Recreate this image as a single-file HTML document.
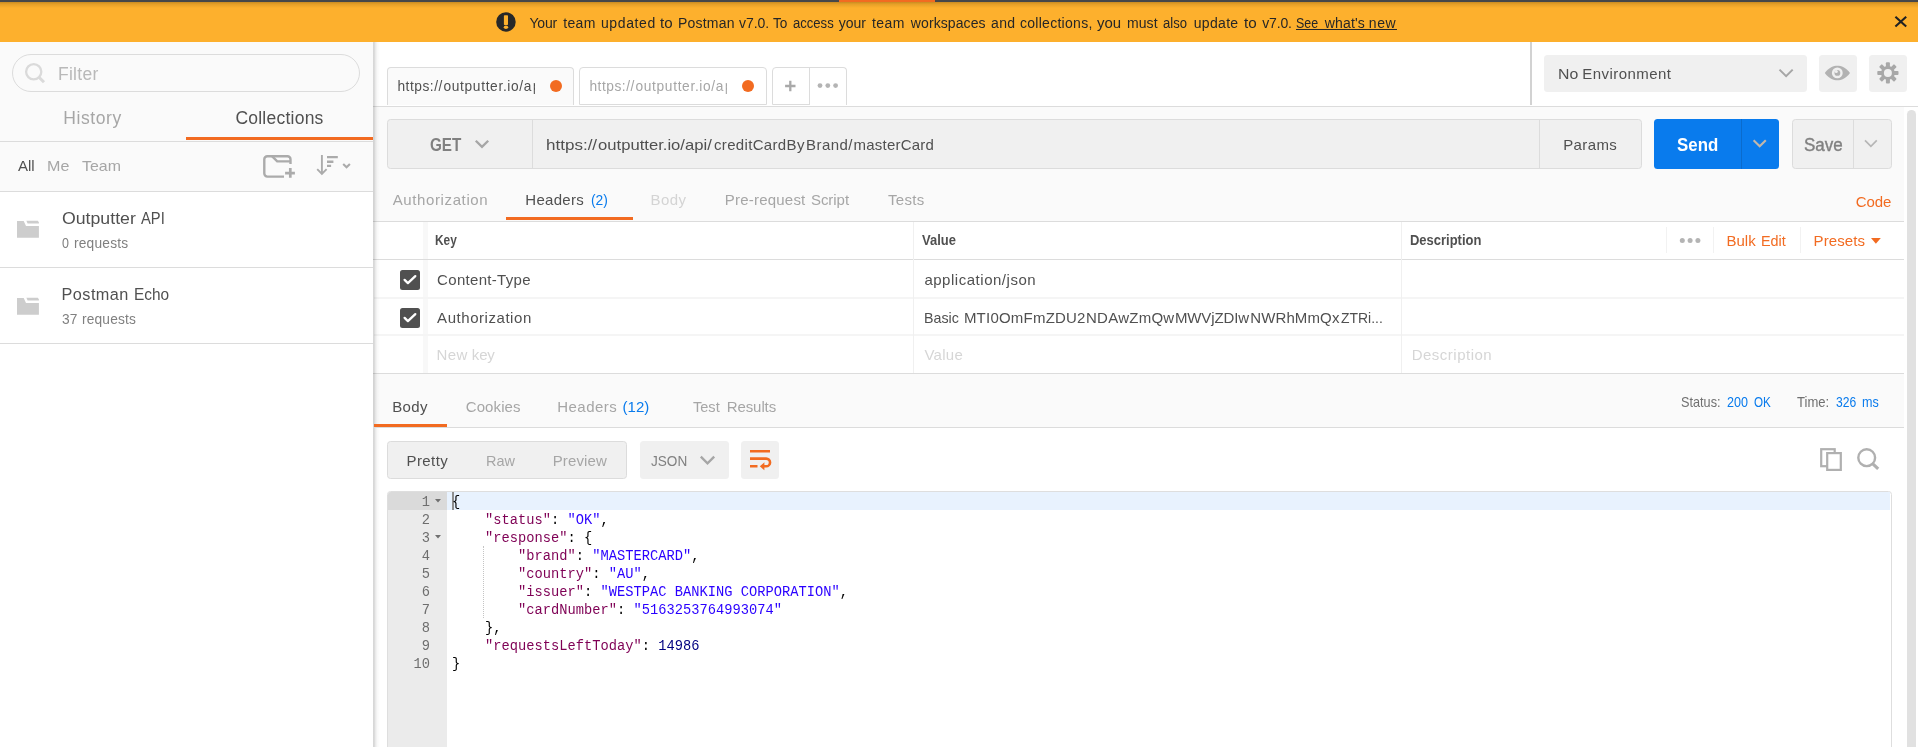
<!DOCTYPE html>
<html lang="en">
<head>
<meta charset="utf-8">
<title>Postman</title>
<style>
*{box-sizing:border-box;margin:0;padding:0}
html,body{width:1918px;height:747px;overflow:hidden;background:#fff}
body{position:relative;will-change:transform;font-family:"Liberation Sans",sans-serif;font-size:15px;color:#505050}
.a{position:absolute}
.t{position:absolute;white-space:pre;line-height:20px;height:20px}
svg{position:absolute;overflow:visible}
.hl{position:absolute;background:#dcdcdc;height:1px}
.vl{position:absolute;background:#dcdcdc;width:1px}
.btn{position:absolute;background:#f0f0f0;border-radius:3.5px}
.code{font-family:"Liberation Mono",monospace;font-size:13.72px;letter-spacing:0.017px;line-height:18px;height:18px;position:absolute;white-space:pre;color:#000;left:452px}
.k{color:#7f0055}.s{color:#2a00ff}.n{color:#000080}
.ln{font-family:"Liberation Mono",monospace;font-size:13.72px;line-height:18px;height:18px;position:absolute;text-align:right;width:42px;left:388px;color:#6e6e6e}
</style>
</head>
<body>
<!-- banner -->
<div class="a" style="left:0;top:0;width:1918px;height:42px;background:#fdb02d"></div>
<div class="a" style="left:0;top:1px;width:1918px;height:7px;background:linear-gradient(180deg,rgba(60,40,0,.34),rgba(60,40,0,.12) 45%,rgba(60,40,0,0))"></div>
<div class="a" style="left:0;top:0;width:1918px;height:1.7px;background:#464749"></div>
<div class="a" style="left:839px;top:0;width:96px;height:1.7px;background:#f26b21"></div>
<svg style="left:496px;top:12px" width="20" height="20" viewBox="0 0 20 20"><circle cx="9.95" cy="9.95" r="9.75" fill="#282828"/><rect x="7.9" y="3.2" width="4.1" height="9.7" rx="0.7" fill="#fdb02d"/><ellipse cx="9.95" cy="15.2" rx="2.2" ry="1.7" fill="#fdb02d"/></svg>
<svg style="left:1890px;top:11px" width="22" height="22" viewBox="0 0 22 22"><path d="M5.4 5.7 L16.2 15.6 M16.2 5.7 L5.4 15.6" stroke="#222" stroke-width="2.1" fill="none"/></svg>

<div class="a" style="left:1295.5px;top:29px;width:101px;height:1px;background:#262626"></div>

<!-- sidebar -->
<div class="a" style="left:0;top:42px;width:373px;height:705px;background:#fafafa"></div>
<div class="a" style="left:0;top:192px;width:373px;height:555px;background:#fff"></div>
<div class="a" style="left:12px;top:54px;width:348px;height:38px;border:1px solid #dcdcdc;border-radius:19px;background:#fafafa"></div>
<svg style="left:24px;top:62px" width="24" height="24" viewBox="0 0 24 24"><circle cx="9.7" cy="9.8" r="7.6" stroke="#dadada" stroke-width="2.3" fill="none"/><path d="M15 15.3 L20 20.2" stroke="#dadada" stroke-width="3" fill="none"/></svg>
<div class="a" style="left:186px;top:137px;width:187px;height:3px;background:#f26b21"></div>
<div class="hl" style="left:0;top:141px;width:373px"></div>
<svg style="left:250px;top:145px" width="110" height="45" viewBox="250 145 110 45"><g stroke="#ababab" fill="none" stroke-width="2.4"><path d="M284 176.6 H267.3 a3 3 0 0 1 -3 -3 V159.2 a3 3 0 0 1 3 -3 H287.5 a3 3 0 0 1 3 3 V163.9"/><path d="M272.2 156.4 L277.2 161.4 H290.5"/><path d="M290.3 168.1 V177.8 M285.1 173.1 H294.9" stroke-width="2.7"/><path d="M321.9 155 V173.6 M317.2 169.2 L321.9 173.9 L326.6 169.2" stroke-width="1.9"/><path d="M327 157.2 H337.8 M327 161.75 H333.4 M327 165.9 H331.1" stroke-width="2.3"/><path d="M343.2 164 L346.55 167.3 L349.9 164" stroke-width="2.1"/></g></svg>
<div class="hl" style="left:0;top:191px;width:373px"></div>
<div class="hl" style="left:0;top:267px;width:373px"></div>
<div class="hl" style="left:0;top:343px;width:373px"></div>
<svg style="left:0;top:212px" width="60" height="30" viewBox="0 0 60 30"><path d="M17 9 H23.7 L26 14.1 H38.9 V25.7 H17 Z M26.4 8.8 H37.8 L38.9 10.2 V11.6 H27.6 Z" fill="#cdcdcd"/></svg>
<svg style="left:0;top:288.5px" width="60" height="30" viewBox="0 0 60 30"><path d="M17 9 H23.7 L26 14.1 H38.9 V25.7 H17 Z M26.4 8.8 H37.8 L38.9 10.2 V11.6 H27.6 Z" fill="#cdcdcd"/></svg>

<!-- main backgrounds -->
<div class="a" style="left:373px;top:42px;width:1545px;height:64px;background:#fff"></div>
<div class="a" style="left:373px;top:107px;width:1531px;height:115px;background:#fafafa"></div>
<div class="a" style="left:373px;top:374px;width:1531px;height:53px;background:#fafafa"></div>
<div class="hl" style="left:373px;top:106px;width:1545px"></div>

<!-- tabs -->
<div class="a" style="left:387px;top:67px;width:187px;height:38px;background:#fafafa;border:1px solid #dcdcdc;border-bottom:none;border-radius:4px 4px 0 0"></div>
<div class="a" style="left:579px;top:67px;width:188px;height:38px;background:#fff;border:1px solid #dcdcdc;border-radius:4px 4px 0 0"></div>
<div class="a" style="left:772px;top:67px;width:38px;height:38px;background:#fff;border:1px solid #dcdcdc;border-radius:4px 0 0 0"></div>
<div class="a" style="left:809px;top:67px;width:38px;height:38px;background:#fff;border:1px solid #dcdcdc;border-bottom:none;border-radius:0 4px 0 0"></div>
<div class="a" style="left:390px;top:70px;width:145.1px;height:32px;overflow:hidden"><div class="t" style="left:7.40px;top:6.50px;font-size:13.75px;color:#505050"><span style="display:inline-block;letter-spacing:0.521px">https://</span><span style="display:inline-block;letter-spacing:0.653px;margin-left:0.66px">outputter.io/a</span><span style="display:inline-block;transform:scaleX(0.8750);transform-origin:0 0;margin-left:1.05px">p</span></div></div>
<div class="a" style="left:582px;top:70px;width:145.2px;height:32px;overflow:hidden"><div class="t" style="left:7.40px;top:6.50px;font-size:13.75px;color:#a6a6a6"><span style="display:inline-block;letter-spacing:0.521px">https://</span><span style="display:inline-block;letter-spacing:0.653px;margin-left:0.66px">outputter.io/a</span><span style="display:inline-block;transform:scaleX(0.8750);transform-origin:0 0;margin-left:1.05px">p</span></div></div>
<div class="a" style="left:549.5px;top:79.8px;width:12.4px;height:12.4px;border-radius:50%;background:#f26b21"></div>
<div class="a" style="left:742px;top:79.8px;width:12.4px;height:12.4px;border-radius:50%;background:#f26b21"></div>
<svg style="left:780px;top:76px" width="20" height="20" viewBox="0 0 20 20"><path d="M10.3 4.8 V15.2 M5.1 10 H15.5" stroke="#a9a9a9" stroke-width="2.3" fill="none"/></svg>
<svg style="left:815px;top:80px" width="26" height="12" viewBox="0 0 26 12"><circle cx="5" cy="5.6" r="2.4" fill="#b4b4b4"/><circle cx="12.8" cy="5.6" r="2.4" fill="#b4b4b4"/><circle cx="20.6" cy="5.6" r="2.4" fill="#b4b4b4"/></svg>

<!-- environment -->
<div class="a" style="left:1530px;top:42px;width:2px;height:63px;background:#d2d2d2"></div>
<div class="btn" style="left:1544px;top:55px;width:263px;height:37px"></div>
<svg style="left:1778px;top:68px" width="16" height="10" viewBox="0 0 16 10"><path d="M1.5 1.6 L8.1 8.2 L14.7 1.6" stroke="#a6a6a6" stroke-width="2" fill="none"/></svg>
<div class="btn" style="left:1819px;top:55px;width:38px;height:37px"></div>
<div class="btn" style="left:1869px;top:55px;width:38px;height:37px"></div>
<svg style="left:1824px;top:64px" width="27" height="18" viewBox="0 0 27 18"><path d="M0.8 8.9 C5 3.2 9.5 1.7 13.4 1.7 C17.3 1.7 21.8 3.2 26 8.9 C21.8 14.6 17.3 16.2 13.4 16.2 C9.5 16.2 5 14.6 0.8 8.9 Z" fill="#b2b2b2"/><circle cx="13.3" cy="8.9" r="5.4" fill="#f0f0f0"/><circle cx="13.4" cy="8.9" r="2.9" fill="#b2b2b2"/><circle cx="12.3" cy="7.6" r="1.5" fill="#f0f0f0"/></svg>
<svg style="left:1876px;top:61px" width="24" height="24" viewBox="0 0 24 24"><g fill="#a8a8a8"><circle cx="11.9" cy="11.9" r="6.9"/><rect x="9.9" y="1.3" width="4" height="21.2" rx="0.9"/><rect x="9.9" y="1.3" width="4" height="21.2" rx="0.9" transform="rotate(45 11.9 11.9)"/><rect x="9.9" y="1.3" width="4" height="21.2" rx="0.9" transform="rotate(90 11.9 11.9)"/><rect x="9.9" y="1.3" width="4" height="21.2" rx="0.9" transform="rotate(135 11.9 11.9)"/></g><circle cx="11.9" cy="11.9" r="4" fill="#f0f0f0"/></svg>

<!-- URL bar -->
<div class="a" style="left:387px;top:119px;width:1255px;height:50px;background:#f0f0f0;border:1px solid #dcdcdc;border-radius:3.5px"></div>
<div class="vl" style="left:532px;top:120px;height:48px"></div>
<div class="vl" style="left:1539px;top:120px;height:48px"></div>
<svg style="left:474px;top:139px" width="16" height="11" viewBox="0 0 16 11"><path d="M1.8 1.7 L8 7.9 L14.2 1.7" stroke="#a6a6a6" stroke-width="2.3" fill="none"/></svg>
<div class="a" style="left:1654px;top:118.6px;width:125px;height:50.2px;background:#097bed;border-radius:3.5px"></div>
<div class="a" style="left:1741px;top:118.6px;width:1px;height:50.2px;background:#0a6bcd"></div>
<svg style="left:1752px;top:139px" width="16" height="10" viewBox="0 0 16 10"><path d="M1.6 1.2 L7.7 7.3 L13.8 1.2" stroke="#c2b7ab" stroke-width="2.1" fill="none"/></svg>
<div class="a" style="left:1792px;top:119px;width:100px;height:50px;background:#f0f0f0;border:1px solid #dcdcdc;border-radius:3.5px"></div>
<div class="vl" style="left:1853px;top:120px;height:48px"></div>
<svg style="left:1864px;top:139px" width="14" height="9" viewBox="0 0 14 9"><path d="M1 1.4 L6.9 7.3 L12.8 1.4" stroke="#b6b6b6" stroke-width="1.7" fill="none"/></svg>

<!-- request tabs -->
<div class="a" style="left:506px;top:217px;width:127px;height:3px;background:#f26b21"></div>
<div class="hl" style="left:373px;top:221px;width:1531px"></div>

<!-- headers table -->
<div class="a" style="left:423px;top:222px;width:5px;height:151px;background:#f8f8f8"></div>
<div class="hl" style="left:373px;top:259px;width:1531px"></div>
<div class="hl" style="left:374px;top:296.7px;width:1530px;height:2px;background:#f5f5f5"></div>
<div class="hl" style="left:374px;top:334px;width:1530px;height:2px;background:#f5f5f5"></div>
<div class="hl" style="left:373px;top:373px;width:1531px"></div>
<div class="vl" style="left:913px;top:222px;height:151px;background:#f0f0f0"></div>
<div class="vl" style="left:1401px;top:222px;height:151px;background:#f0f0f0"></div>
<div class="vl" style="left:1666px;top:227px;height:26px;background:#f2f2f2"></div>
<div class="vl" style="left:1713px;top:227px;height:26px;background:#f2f2f2"></div>
<div class="vl" style="left:1800px;top:227px;height:26px;background:#f2f2f2"></div>
<svg style="left:1678px;top:236px" width="26" height="10" viewBox="0 0 26 10"><circle cx="4.3" cy="4.6" r="2.5" fill="#b4b4b4"/><circle cx="12.1" cy="4.6" r="2.5" fill="#b4b4b4"/><circle cx="19.9" cy="4.6" r="2.5" fill="#b4b4b4"/></svg>
<svg style="left:1871px;top:238.3px" width="10" height="6" viewBox="0 0 10 6"><path d="M0 0 H9.8 L4.9 5.8 Z" fill="#f26b21"/></svg>
<div class="a" style="left:400px;top:270px;width:20px;height:20px;border-radius:2.5px;background:#505050"></div><svg style="left:400px;top:270px" width="20" height="20" viewBox="0 0 20 20"><path d="M4.6 9.9 L7.9 13.1 L15.3 6.1" stroke="#fff" stroke-width="2.3" stroke-linecap="round" stroke-linejoin="round" fill="none"/></svg>
<div class="a" style="left:400px;top:308px;width:20px;height:20px;border-radius:2.5px;background:#505050"></div><svg style="left:400px;top:308px" width="20" height="20" viewBox="0 0 20 20"><path d="M4.6 9.9 L7.9 13.1 L15.3 6.1" stroke="#fff" stroke-width="2.3" stroke-linecap="round" stroke-linejoin="round" fill="none"/></svg>

<div class="a" style="left:373px;top:42px;width:7px;height:705px;background:linear-gradient(90deg,rgba(0,0,0,.16),rgba(0,0,0,.15) 18%,rgba(0,0,0,.075) 38%,rgba(0,0,0,.025) 65%,rgba(0,0,0,0))"></div>
<!-- response tabs -->
<div class="hl" style="left:373px;top:427px;width:1531px"></div>
<div class="a" style="left:374px;top:424px;width:73px;height:3px;background:#f26b21"></div>

<!-- response toolbar -->
<div class="a" style="left:387px;top:441px;width:240px;height:37.5px;background:#f0f0f0;border:1px solid #dcdcdc;border-radius:3.5px"></div>
<div class="btn" style="left:640px;top:441px;width:88.6px;height:37.5px"></div>
<svg style="left:699px;top:455px" width="18" height="11" viewBox="0 0 18 11"><path d="M1.8 1.6 L8.5 8.3 L15.2 1.6" stroke="#a6a6a6" stroke-width="2.3" fill="none"/></svg>
<div class="btn" style="left:741px;top:441px;width:38px;height:37.5px"></div>
<svg style="left:736px;top:436px" width="48" height="48" viewBox="736 436 48 48"><path d="M750 451.3 H770 M750 458.6 H766.2 a3.85 3.85 0 0 1 0 7.7 H763 M750 466.3 H757.5" stroke="#f26b21" stroke-width="2.6" fill="none"/><path d="M759.8 466.3 L764.4 462.3 V470.3 Z" fill="#f26b21"/></svg>
<svg style="left:1815px;top:443px" width="70" height="32" viewBox="1815 443 70 32"><g stroke="#b0b0b0" fill="none"><rect x="1821.2" y="449.2" width="13.5" height="17" stroke-width="2.2"/><rect x="1827.2" y="453.1" width="13.6" height="16.8" stroke-width="2.2" fill="#fff"/><circle cx="1866.7" cy="457.7" r="8.4" stroke-width="2.4"/><path d="M1872.8 463.8 L1878.2 468.8" stroke-width="3.2"/></g></svg>

<!-- code editor -->
<div class="a" style="left:387px;top:491px;width:1505px;height:260px;border:1px solid #dedede;border-radius:3.5px;background:#fff"></div>
<div class="a" style="left:388px;top:492px;width:59px;height:255px;background:#ebebeb;border-radius:3px 0 0 0"></div>
<div class="a" style="left:447px;top:492px;width:1443px;height:17.7px;background:#e8f2fe"></div>
<div class="a" style="left:388px;top:492px;width:59px;height:17.7px;background:#dadada;border-radius:3px 0 0 0"></div>
<div class="a" style="left:452px;top:492px;width:1.7px;height:17.7px;background:#8e8e8e"></div>
<div class="a" style="left:483px;top:546px;width:0;height:72px;border-left:1px dotted #c4c4c4"></div>
<svg style="left:435.2px;top:499.2px" width="6" height="4" viewBox="0 0 6 4"><path d="M0 0 H6 L3 3.5 Z" fill="#707070"/></svg>
<svg style="left:435.2px;top:535.2px" width="6" height="4" viewBox="0 0 6 4"><path d="M0 0 H6 L3 3.5 Z" fill="#707070"/></svg>
<div class="ln" style="top:493.5px">1</div>
<div class="ln" style="top:511.5px">2</div>
<div class="ln" style="top:529.5px">3</div>
<div class="ln" style="top:547.5px">4</div>
<div class="ln" style="top:565.5px">5</div>
<div class="ln" style="top:583.5px">6</div>
<div class="ln" style="top:601.5px">7</div>
<div class="ln" style="top:619.5px">8</div>
<div class="ln" style="top:637.5px">9</div>
<div class="ln" style="top:655.5px">10</div>
<div class="code" style="top:493.5px">{</div>
<div class="code" style="top:511.5px">    <span class="k">"status"</span>: <span class="s">"OK"</span>,</div>
<div class="code" style="top:529.5px">    <span class="k">"response"</span>: {</div>
<div class="code" style="top:547.5px">        <span class="k">"brand"</span>: <span class="s">"MASTERCARD"</span>,</div>
<div class="code" style="top:565.5px">        <span class="k">"country"</span>: <span class="s">"AU"</span>,</div>
<div class="code" style="top:583.5px">        <span class="k">"issuer"</span>: <span class="s">"WESTPAC BANKING CORPORATION"</span>,</div>
<div class="code" style="top:601.5px">        <span class="k">"cardNumber"</span>: <span class="s">"5163253764993074"</span></div>
<div class="code" style="top:619.5px">    },</div>
<div class="code" style="top:637.5px">    <span class="k">"requestsLeftToday"</span>: <span class="n">14986</span></div>
<div class="code" style="top:655.5px">}</div>

<!-- sidebar shadow + scrollbar -->
<div class="a" style="left:1904px;top:107px;width:14px;height:640px;background:#fff"></div>
<div class="a" style="left:1907px;top:109.8px;width:9px;height:650px;background:#e1e1e1;border-radius:4.5px"></div>

<!-- texts -->
<div class="t" style="left:57.90px;top:64.00px;font-size:17.5px;color:#b9b9b9;letter-spacing:0.308px">Filter</div>
<div class="t" style="left:63.30px;top:108.00px;font-size:17.5px;color:#a6a6a6;letter-spacing:0.584px">History</div>
<div class="t" style="left:235.40px;top:108.00px;font-size:17.5px;color:#505050;letter-spacing:0.236px">Collections</div>
<div class="t" style="left:18.00px;top:155.50px;font-size:15px;color:#505050;letter-spacing:-0.069px">All</div>
<div class="t" style="left:46.93px;top:155.50px;font-size:15px;color:#a6a6a6;transform:scaleX(1.0721);transform-origin:0 0">Me</div>
<div class="t" style="left:81.80px;top:155.50px;font-size:15px;color:#a6a6a6;transform:scaleX(1.0612);transform-origin:0 0">Team</div>
<div class="t" style="left:429.70px;top:135.00px;font-size:17.5px;color:#808080;transform:scaleX(0.8709);transform-origin:0 0;font-weight:700">GET</div>
<div class="t" style="left:1563.20px;top:134.50px;font-size:15px;color:#505050;letter-spacing:0.384px">Params</div>
<div class="t" style="left:1676.80px;top:135.00px;font-size:18px;color:#ffffff;transform:scaleX(0.9370);transform-origin:0 0;font-weight:700">Send</div>
<div class="t" style="left:1803.80px;top:135.00px;font-size:17.5px;color:#808080;transform:scaleX(0.9705);transform-origin:0 0;-webkit-text-stroke:0.4px #808080">Save</div>
<div class="t" style="left:392.70px;top:189.50px;font-size:15px;color:#a6a6a6;letter-spacing:0.616px">Authorization</div>
<div class="t" style="left:525.30px;top:189.50px;font-size:15px;color:#505050;letter-spacing:0.284px">Headers</div>
<div class="t" style="left:590.50px;top:189.50px;font-size:15px;color:#097bed;transform:scaleX(0.9216);transform-origin:0 0">(2)</div>
<div class="t" style="left:650.50px;top:189.50px;font-size:15px;color:#d4d4d4;letter-spacing:0.470px">Body</div>
<div class="t" style="left:888.00px;top:189.50px;font-size:15px;color:#a6a6a6;letter-spacing:0.298px">Tests</div>
<div class="t" style="left:1855.80px;top:191.50px;font-size:15px;color:#f26b21;letter-spacing:-0.106px">Code</div>
<div class="t" style="left:434.70px;top:230.50px;font-size:13.75px;color:#505050;transform:scaleX(0.8641);transform-origin:0 0;font-weight:700">Key</div>
<div class="t" style="left:922.20px;top:230.50px;font-size:13.75px;color:#505050;transform:scaleX(0.9427);transform-origin:0 0;font-weight:700">Value</div>
<div class="t" style="left:1409.70px;top:230.50px;font-size:13.75px;color:#505050;transform:scaleX(0.9437);transform-origin:0 0;font-weight:700">Description</div>
<div class="t" style="left:1813.60px;top:230.50px;font-size:15px;color:#f26b21;letter-spacing:0.075px">Presets</div>
<div class="t" style="left:437.10px;top:269.50px;font-size:15px;color:#505050;letter-spacing:0.308px">Content-Type</div>
<div class="t" style="left:924.40px;top:269.50px;font-size:15px;color:#505050;letter-spacing:0.523px">application/json</div>
<div class="t" style="left:437.10px;top:307.50px;font-size:15px;color:#505050;letter-spacing:0.549px">Authorization</div>
<div class="t" style="left:924.40px;top:344.50px;font-size:15px;color:#d6d6d6;letter-spacing:0.273px">Value</div>
<div class="t" style="left:1411.70px;top:344.50px;font-size:15px;color:#d6d6d6;letter-spacing:0.491px">Description</div>
<div class="t" style="left:392.25px;top:396.50px;font-size:15px;color:#505050;letter-spacing:0.354px">Body</div>
<div class="t" style="left:465.75px;top:396.50px;font-size:15px;color:#a6a6a6;letter-spacing:0.093px">Cookies</div>
<div class="t" style="left:557.25px;top:396.50px;font-size:15px;color:#a6a6a6;letter-spacing:0.467px">Headers</div>
<div class="t" style="left:622.50px;top:396.50px;font-size:15px;color:#097bed;letter-spacing:0.023px">(12)</div>
<div class="t" style="left:1681.35px;top:392.50px;font-size:13.75px;color:#707070;transform:scaleX(0.9230);transform-origin:0 0">Status:</div>
<div class="t" style="left:1797.10px;top:392.50px;font-size:13.75px;color:#707070;transform:scaleX(0.9502);transform-origin:0 0">Time:</div>
<div class="t" style="left:406.50px;top:450.50px;font-size:15px;color:#505050;letter-spacing:0.405px">Pretty</div>
<div class="t" style="left:485.64px;top:450.50px;font-size:15px;color:#a6a6a6;transform:scaleX(0.9632);transform-origin:0 0">Raw</div>
<div class="t" style="left:552.70px;top:450.50px;font-size:15px;color:#a6a6a6;letter-spacing:0.130px">Preview</div>
<div class="t" style="left:651.25px;top:450.50px;font-size:15px;color:#808080;transform:scaleX(0.9063);transform-origin:0 0">JSON</div>
<div class="t" style="left:529.40px;top:13.00px;font-size:14px;color:#262626"><span style="display:inline-block;letter-spacing:-0.175px">Your</span> <span style="display:inline-block;letter-spacing:0.346px;margin-left:2.32px">team</span> <span style="display:inline-block;letter-spacing:0.630px;margin-left:1.30px">updated</span> <span style="display:inline-block;transform:scaleX(1.0766);transform-origin:0 0;margin-left:0.29px">to</span> <span style="display:inline-block;letter-spacing:0.240px;margin-left:2.23px">Postman</span> <span style="display:inline-block;letter-spacing:-0.065px;margin-left:0.28px">v7.0.</span> <span style="display:inline-block;transform:scaleX(0.9733);transform-origin:0 0;margin-left:0.49px">To</span> <span style="display:inline-block;transform:scaleX(0.9341);transform-origin:0 0;margin-left:0.72px">access</span> <span style="display:inline-block;letter-spacing:-0.024px;margin-left:-1.56px">your</span> <span style="display:inline-block;letter-spacing:0.413px;margin-left:2.27px">team</span> <span style="display:inline-block;letter-spacing:0.087px;margin-left:2.14px">workspaces</span> <span style="display:inline-block;letter-spacing:0.314px;margin-left:1.62px">and</span> <span style="display:inline-block;letter-spacing:0.285px;margin-left:0.61px">collections,</span> <span style="display:inline-block;transform:scaleX(1.0695);transform-origin:0 0;margin-left:0.24px">you</span> <span style="display:inline-block;letter-spacing:0.084px;margin-left:3.74px">must</span> <span style="display:inline-block;transform:scaleX(0.9345);transform-origin:0 0;margin-left:1.74px">also</span> <span style="display:inline-block;letter-spacing:0.333px;margin-left:0.83px">update</span> <span style="display:inline-block;transform:scaleX(1.0850);transform-origin:0 0;margin-left:1.39px">to</span> <span style="display:inline-block;letter-spacing:-0.165px;margin-left:2.93px">v7.0.</span> <span style="display:inline-block;transform:scaleX(0.8876);transform-origin:0 0;margin-left:-0.01px">See</span> <span style="display:inline-block;letter-spacing:0.151px;margin-left:0.35px">what's</span> <span style="display:inline-block;letter-spacing:0.589px;margin-left:-0.04px">new</span></div>
<div class="t" style="left:545.67px;top:134.50px;font-size:15px;color:#505050"><span style="display:inline-block;transform:scaleX(1.1348);transform-origin:0 0">https://</span><span style="display:inline-block;transform:scaleX(1.1092);transform-origin:0 0;margin-left:7.71px">outputter.io/api/</span><span style="display:inline-block;letter-spacing:0.337px;margin-left:13.02px">creditCardBy</span><span style="display:inline-block;letter-spacing:0.455px;margin-left:1.26px">Brand/</span><span style="display:inline-block;letter-spacing:0.199px;margin-left:0.68px">masterCard</span></div>
<div class="t" style="left:923.95px;top:307.50px;font-size:15px;color:#505050"><span style="display:inline-block;transform:scaleX(0.9508);transform-origin:0 0">Basic</span> <span style="display:inline-block;letter-spacing:0.217px;margin-left:-0.90px">MTI0OmFmZDU2</span><span style="display:inline-block;letter-spacing:0.249px;margin-left:0.34px">NDAwZmQw</span><span style="display:inline-block;letter-spacing:-0.108px;margin-left:0.52px">MWVjZDIw</span><span style="display:inline-block;letter-spacing:0.125px;margin-left:1.18px">NWRhMmQx</span><span style="display:inline-block;transform:scaleX(0.9287);transform-origin:0 0;margin-left:0.97px">ZTRi...</span></div>
<div class="t" style="left:62.07px;top:208.00px;font-size:16.25px;color:#505050"><span style="display:inline-block;transform:scaleX(1.0892);transform-origin:0 0">Outputter</span> <span style="display:inline-block;transform:scaleX(0.9074);transform-origin:0 0;margin-left:6.97px">API</span></div>
<div class="t" style="left:61.60px;top:284.00px;font-size:16.25px;color:#505050"><span style="display:inline-block;letter-spacing:0.435px">Postman</span> <span style="display:inline-block;transform:scaleX(0.9486);transform-origin:0 0;margin-left:0.26px">Echo</span></div>
<div class="t" style="left:61.80px;top:233.50px;font-size:13.75px;color:#808080"><span style="display:inline-block;transform:scaleX(0.9075);transform-origin:0 0">0</span> <span style="display:inline-block;letter-spacing:0.220px;margin-left:0.63px">requests</span></div>
<div class="t" style="left:62.07px;top:309.50px;font-size:13.75px;color:#808080"><span style="display:inline-block;letter-spacing:-0.017px">37</span> <span style="display:inline-block;letter-spacing:0.191px;margin-left:0.75px">requests</span></div>
<div class="t" style="left:1557.55px;top:63.50px;font-size:15px;color:#505050"><span style="display:inline-block;transform:scaleX(1.0543);transform-origin:0 0">No</span> <span style="display:inline-block;letter-spacing:0.451px;margin-left:1.31px">Environment</span></div>
<div class="t" style="left:724.80px;top:189.50px;font-size:15px;color:#a6a6a6"><span style="display:inline-block;letter-spacing:0.210px">Pre-request</span> <span style="display:inline-block;letter-spacing:-0.035px;margin-left:1.26px">Script</span></div>
<div class="t" style="left:1726.50px;top:230.50px;font-size:15px;color:#f26b21"><span style="display:inline-block;letter-spacing:0.007px">Bulk</span> <span style="display:inline-block;transform:scaleX(0.9580);transform-origin:0 0;margin-left:1.47px">Edit</span></div>
<div class="t" style="left:436.50px;top:344.50px;font-size:15px;color:#d6d6d6"><span style="display:inline-block;letter-spacing:0.413px">New</span> <span style="display:inline-block;letter-spacing:-0.171px;margin-left:-0.11px">key</span></div>
<div class="t" style="left:693.30px;top:396.50px;font-size:15px;color:#a6a6a6"><span style="display:inline-block;transform:scaleX(0.9703);transform-origin:0 0">Test</span> <span style="display:inline-block;letter-spacing:-0.086px;margin-left:1.72px">Results</span></div>
<div class="t" style="left:1727.30px;top:392.50px;font-size:13.75px;color:#097bed"><span style="display:inline-block;transform:scaleX(0.9144);transform-origin:0 0">200</span> <span style="display:inline-block;transform:scaleX(0.8480);transform-origin:0 0;margin-left:-0.01px">OK</span></div>
<div class="t" style="left:1835.70px;top:392.50px;font-size:13.75px;color:#097bed"><span style="display:inline-block;transform:scaleX(0.8800);transform-origin:0 0">326</span> <span style="display:inline-block;transform:scaleX(0.9158);transform-origin:0 0;margin-left:-0.46px">ms</span></div>
</body>
</html>
